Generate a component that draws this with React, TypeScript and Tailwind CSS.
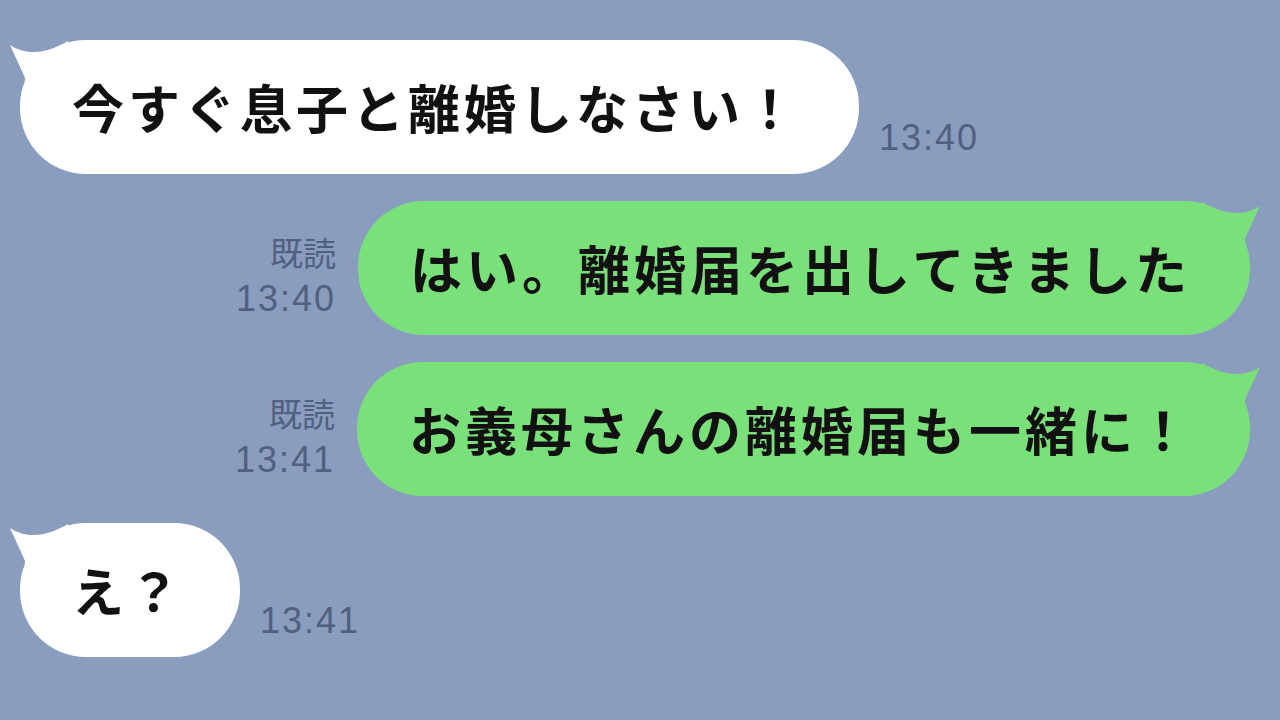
import React from "react";

const JP = { fontFamily: '"Noto Sans CJK JP", "Noto Sans", sans-serif' };
const TS = { fontFamily: '"Liberation Sans", Arial, sans-serif' };

function LeftTail({ color }: { color: string }) {
  return (
    <svg className="absolute left-[-12px] top-0" width="60" height="60" viewBox="0 0 60 60">
      <path d="M2,5 C15,14 35,16 60,1 L60,60 L16,60 L17,38 C12,26 6,14 2,5 Z" fill={color} />
    </svg>
  );
}

function RightTail({ color }: { color: string }) {
  return (
    <svg className="absolute right-[-12px] top-0" width="60" height="60" viewBox="0 0 60 60">
      <path d="M58,5 C45,14 25,16 0,1 L0,60 L44,60 L43,38 C48,26 54,14 58,5 Z" fill={color} />
    </svg>
  );
}

function Bubble({ text, side, pr }: { text: string; side: "left" | "right"; pr?: string }) {
  const color = side === "left" ? "#ffffff" : "#7ae07a";
  return (
    <div
      className={`relative h-[134px] rounded-[66px] flex items-center pl-[52px] ${pr ?? "pr-[59px]"} ${
        side === "left" ? "bg-white" : "bg-[#7ae07a]"
      }`}
    >
      {side === "left" ? <LeftTail color={color} /> : <RightTail color={color} />}
      <span
        className="relative text-[52px] font-bold text-[#111111] tracking-[4px] leading-none whitespace-nowrap"
        style={JP}
      >
        {text}
      </span>
    </div>
  );
}

function Time({ t }: { t: string }) {
  return (
    <span className="text-[36px] leading-none text-[#51607f] tracking-[2px]" style={TS}>
      {t}
    </span>
  );
}

function Read({ t }: { t: string }) {
  return (
    <div className="flex flex-col items-end mb-[18px]">
      <span className="text-[33px] leading-none text-[#51607f] mb-[12px]" style={JP}>
        既読
      </span>
      <Time t={t} />
    </div>
  );
}

export default function App() {
  return (
    <div className="w-[1280px] h-[720px] bg-[#8a9dbe] overflow-hidden flex flex-col gap-[27px] pt-[40px]">
      <div className="flex items-end pl-[20px] gap-[20px]">
        <Bubble text="今すぐ息子と離婚しなさい！" side="left" />
        <div className="mb-[18px]">
          <Time t="13:40" />
        </div>
      </div>
      <div className="flex items-end justify-end pr-[30px] gap-[22px]">
        <Read t="13:40" />
        <Bubble text="はい。離婚届を出してきました" side="right" />
      </div>
      <div className="flex items-end justify-end pr-[30px] gap-[22px]">
        <Read t="13:41" />
        <Bubble text="お義母さんの離婚届も一緒に！" side="right" pr="pr-[57px]" />
      </div>
      <div className="flex items-end pl-[20px] gap-[20px]">
        <Bubble text="え？" side="left" pr="pr-[56px]" />
        <div className="mb-[18px]">
          <Time t="13:41" />
        </div>
      </div>
    </div>
  );
}
